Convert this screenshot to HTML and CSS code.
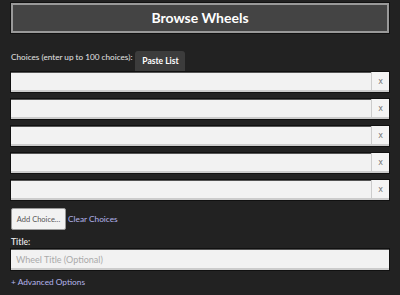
FILE: index.html
```html
<!DOCTYPE html>
<html lang="en">
<head>
  <meta charset="UTF-8">
  <title>Browse Wheels</title>
  <link rel="stylesheet" href="styles.css">
</head>
<body>
  <div class="page">
    <div class="title-bar">Browse Wheels</div>

    <div class="choices-head">
      <label>Choices (enter up to 100 choices):</label>
      <span class="paste-tab">Paste List</span>
    </div>

    <div class="choice-list">
      <div class="choice-row"><input type="text"><button class="remove">x</button></div>
      <div class="choice-row"><input type="text"><button class="remove">x</button></div>
      <div class="choice-row"><input type="text"><button class="remove">x</button></div>
      <div class="choice-row"><input type="text"><button class="remove">x</button></div>
      <div class="choice-row"><input type="text"><button class="remove">x</button></div>
    </div>

    <div class="actions">
      <button class="add-btn">Add Choice...</button>
      <a href="#" class="link">Clear Choices</a>
    </div>

    <label class="title-label">Title:</label>
    <input type="text" class="title-input" placeholder="Wheel Title (Optional)">

    <a href="#" class="link advanced">+ Advanced Options</a>
  </div>
</body>
</html>
```

FILE: styles.css
```css
body {
  margin: 0;
  background-color: #222;
  font-family: Lato, "Liberation Sans", sans-serif;
  color: #ddd;
}
.page {
  padding: 3px 11px 0;
}
.title-bar {
  height: 26px;
  line-height: 26px;
  background-color: #444;
  border: 2px solid #999;
  box-shadow: 0 0 0 1px #111;
  color: #fff;
  font-size: 14px;
  font-weight: bold;
  text-align: center;
}
.choices-head {
  display: flex;
  align-items: flex-end;
  margin-top: 18px;
  height: 20px;
}
.choices-head label {
  font-size: 8.2px;
  color: #e4e4e4;
  padding-bottom: 9px;
}
.paste-tab {
  margin-left: 3px;
  width: 50px;
  height: 20px;
  line-height: 20px;
  background-color: #3c3c3c;
  border-radius: 3px 3px 0 0;
  color: #fff;
  font-size: 8.5px;
  font-weight: bold;
  text-align: center;
}
.choice-list {
  display: flex;
  flex-direction: column;
  gap: 7px;
  margin-top: 1px;
}
.choice-row {
  display: flex;
  height: 20px;
  box-shadow: 0 0 0 1px #111;
}
.choice-row input {
  flex: 1;
  min-width: 0;
  margin: 0;
  padding: 0 4px;
  border: none;
  border-top: 1px solid #555;
  border-bottom: 2px solid #ccc;
  background-color: #f2f2f2;
  box-sizing: border-box;
}
.remove {
  width: 18px;
  margin: 0;
  padding: 0;
  border: none;
  border-left: 1px solid #ccc;
  border-bottom: 2px solid #ccc;
  background-color: #f4f4f4;
  color: #777;
  font-family: "DejaVu Sans", sans-serif;
  font-size: 8px;
}
.actions {
  display: flex;
  align-items: center;
  margin-top: 8px;
}
.add-btn {
  width: 55px;
  height: 22px;
  margin: 0;
  padding: 0;
  background-color: #f2f2f2;
  border: 1px solid #999;
  border-radius: 2px;
  color: #555;
  font-family: Lato, "Liberation Sans", sans-serif;
  font-size: 7.5px;
}
.link {
  color: #b4b4ec;
  text-decoration: none;
  font-size: 8.3px;
}
.actions .link {
  margin-left: 2px;
}
.title-label {
  display: block;
  margin-top: 7px;
  font-size: 8.5px;
  font-weight: bold;
  color: #ddd;
}
.title-input {
  display: block;
  width: 100%;
  height: 21px;
  margin-top: 2px;
  padding: 0 5px;
  border: none;
  border-top: 1px solid #555;
  border-bottom: 2px solid #ccc;
  box-shadow: 0 0 0 1px #111;
  background-color: #f2f2f2;
  box-sizing: border-box;
  font-family: Lato, "Liberation Sans", sans-serif;
  font-size: 9px;
}
.title-input::placeholder {
  color: #aaa;
}
.advanced {
  display: block;
  margin-top: 7px;
}
```
